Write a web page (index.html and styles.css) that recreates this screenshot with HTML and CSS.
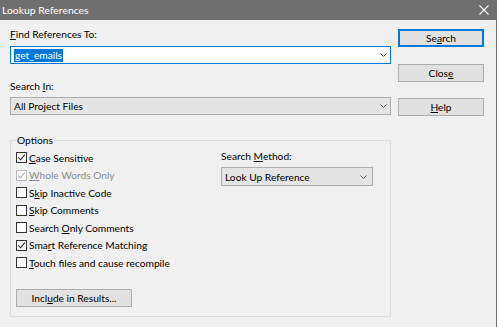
FILE: index.html
```html
<!DOCTYPE html>
<html lang="en">
<head>
    <meta charset="UTF-8">
    <title>Lookup References</title>
    <link rel="stylesheet" href="styles.css">
</head>
<body>
    <div class="window">
        <div class="titlebar">
            <span class="title">Lookup References</span>
            <svg class="close-x" width="10" height="10" viewBox="0 0 10 10">
                <path d="M0.5 0.5 L9.5 9.5 M9.5 0.5 L0.5 9.5" stroke="#fff" stroke-width="1.1" fill="none"/>
            </svg>
        </div>

        <div class="content">
            <div class="main">
                <div class="field-label"><u>F</u>ind References To:</div>
                <div class="combo combo-edit">
                    <span class="sel">get_emails</span>
                    <svg class="chev" width="7" height="4" viewBox="0 0 7 4"><path d="M0.5 0.5 L3.5 3.5 L6.5 0.5" stroke="#5a5a5a" fill="none"/></svg>
                </div>

                <div class="field-label label-gap">Search <u>I</u>n:</div>
                <div class="combo combo-list">
                    <span>All Project Files</span>
                    <svg class="chev" width="7" height="4" viewBox="0 0 7 4"><path d="M0.5 0.5 L3.5 3.5 L6.5 0.5" stroke="#5a5a5a" fill="none"/></svg>
                </div>

                <fieldset class="group">
                    <legend>Options</legend>
                    <div class="group-row">
                        <div class="checks">
                            <div class="check"><span class="box"><svg width="9" height="9" viewBox="0 0 9 9"><path d="M1.2 4.3 L3.6 6.7 L7.9 1.6" stroke="#333" stroke-width="1.1" fill="none"/></svg></span><span><u>C</u>ase Sensitive</span></div>
                            <div class="check disabled"><span class="box"><svg width="9" height="9" viewBox="0 0 9 9"><path d="M1.2 4.3 L3.6 6.7 L7.9 1.6" stroke="#b0b0b0" stroke-width="1.1" fill="none"/></svg></span><span><u>W</u>hole Words Only</span></div>
                            <div class="check"><span class="box"></span><span>S<u>k</u>ip Inactive Code</span></div>
                            <div class="check"><span class="box"></span><span><u>S</u>kip Comments</span></div>
                            <div class="check"><span class="box"></span><span>Search <u>O</u>nly Comments</span></div>
                            <div class="check"><span class="box"><svg width="9" height="9" viewBox="0 0 9 9"><path d="M1.2 4.3 L3.6 6.7 L7.9 1.6" stroke="#333" stroke-width="1.1" fill="none"/></svg></span><span>Sma<u>r</u>t Reference Matching</span></div>
                            <div class="check"><span class="box"></span><span><u>T</u>ouch files and cause recompile</span></div>
                        </div>
                        <div class="method">
                            <div class="field-label">Search <u>M</u>ethod:</div>
                            <div class="combo combo-method">
                                <span>Look Up Reference</span>
                                <svg class="chev" width="7" height="4" viewBox="0 0 7 4"><path d="M0.5 0.5 L3.5 3.5 L6.5 0.5" stroke="#5a5a5a" fill="none"/></svg>
                            </div>
                        </div>
                    </div>
                    <button class="btn include">Incl<u>u</u>de in Results...</button>
                </fieldset>
            </div>

            <div class="side">
                <button class="btn default">Se<u>a</u>rch</button>
                <button class="btn close">Clos<u>e</u></button>
                <button class="btn help"><u>H</u>elp</button>
            </div>
        </div>
    </div>
</body>
</html>
```

FILE: styles.css
```css
body {
    margin: 0;
    background-color: #f0f0f0;
    font-family: Lato, "Noto Sans", sans-serif;
    font-size: 10.2px;
    color: #000;
}

.window {
    width: 496px;
    height: 327px;
    border-right: 1px solid #6f6f6f;
    background-color: #f0f0f0;
}

.titlebar {
    height: 20px;
    background-color: #6f6f6f;
    color: #fff;
    display: flex;
    align-items: center;
    justify-content: space-between;
    padding: 0 7px 0 2px;
}

.title {
    font-size: 10.4px;
}

.close-x {
    display: block;
}

.content {
    display: flex;
    padding-left: 10px;
}

.main {
    width: 381px;
    padding-top: 7px;
}

.field-label {
    line-height: 15px;
}

.label-gap {
    margin-top: 15px;
}

.combo {
    height: 18px;
    box-sizing: border-box;
    border: 1px solid #adadad;
    background-color: #e5e5e5;
    display: flex;
    align-items: center;
    justify-content: space-between;
    padding: 0 3px 0 3px;
}

.chev {
    display: block;
}

.combo-edit {
    margin-top: 4px;
    background-color: #fff;
    border-color: #0078d7;
}

.sel {
    background-color: #0078d7;
    color: #fff;
    line-height: 13px;
    padding: 0 1px;
}

.combo-list {
    margin-top: 3px;
}

.group {
    margin: 18.5px 0 0;
    padding: 2.5px 5px 9px;
    border: 1px solid #dcdcdc;
    min-width: 0;
}

.group legend {
    padding: 0 1px;
    line-height: 13px;
}

.group-row {
    display: flex;
}

.checks {
    width: 205px;
}

.check {
    display: flex;
    align-items: center;
    height: 17.5px;
}

.box {
    width: 11px;
    height: 11px;
    box-sizing: border-box;
    border: 1px solid #333;
    background-color: #fff;
    margin-right: 2px;
    display: flex;
    align-items: center;
    justify-content: center;
}

.box svg {
    display: block;
}

.check.disabled {
    color: #8d8d8d;
}

.check.disabled .box {
    border-color: #bcbcbc;
}

.combo-method {
    width: 152px;
    height: 19px;
    margin-top: 3px;
    padding-right: 5px;
}

.btn {
    height: 18px;
    box-sizing: border-box;
    background-color: #e1e1e1;
    border: 1px solid #adadad;
    font: inherit;
    color: #000;
    padding: 0;
}

.include {
    display: block;
    margin-top: 17.5px;
    width: 116px;
}

.side {
    margin-left: 7px;
    width: 86px;
    padding-top: 9px;
    display: flex;
    flex-direction: column;
}

.btn.default {
    border-color: #0078d7;
    box-shadow: inset 0 0 0 1px #0078d7;
}

.btn.close {
    margin-top: 17px;
}

.btn.help {
    margin-top: 16px;
}
```
